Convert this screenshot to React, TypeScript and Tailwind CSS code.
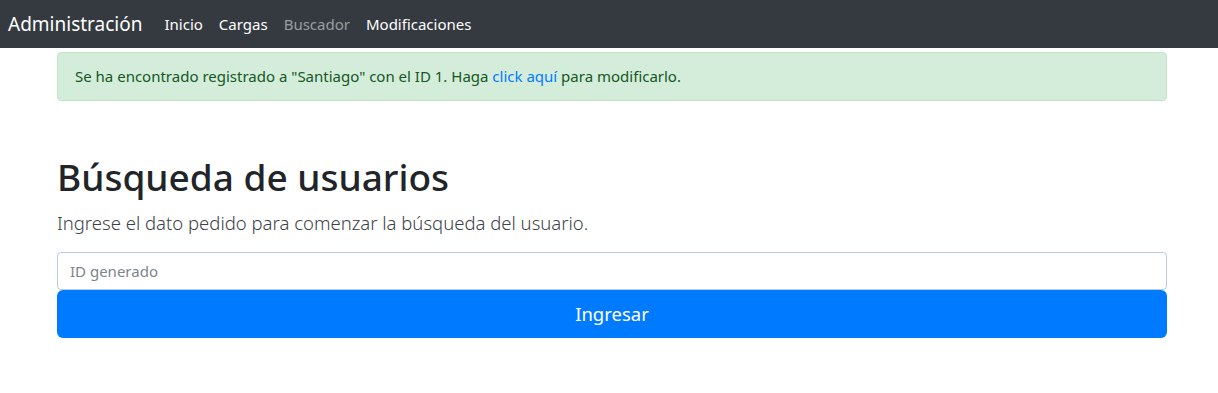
export default function App() {
  return (
    <div className="min-h-[393px] bg-white font-['Noto_Sans',sans-serif] text-[#212529]">
      {/* Navbar */}
      <nav className="flex h-12 items-center bg-[#343a40] px-2">
        <a className="mr-[22px] text-[19px] text-white">Administración</a>
        <div className="flex gap-4 text-[15px]">
          <a className="text-white">Inicio</a>
          <a className="text-white">Cargas</a>
          <a className="text-white/50">Buscador</a>
          <a className="text-white">Modificaciones</a>
        </div>
      </nav>

      <div className="ml-[57px] w-[1110px]">
        {/* Alert */}
        <div className="mt-1 rounded border border-[#c3e6cb] bg-[#d4edda] px-[17px] py-[12px] text-[15px] text-[#155724]">
          Se ha encontrado registrado a "Santiago" con el ID 1. Haga{" "}
          <a className="text-[#007bff]">click aquí</a> para modificarlo.
        </div>

        {/* Heading */}
        <h1 className="mt-[54px] text-[37px] font-medium leading-[1.2]">Búsqueda de usuarios</h1>
        <p className="mt-[10px] text-[18.5px] font-light text-[#3d4248]">
          Ingrese el dato pedido para comenzar la búsqueda del usuario.
        </p>

        {/* Form */}
        <div className="mt-[15px] flex flex-col">
          <input
            className="h-[38px] rounded border border-[#b9cde2] px-3 text-[15px] outline-none placeholder:text-[#7d858c]"
            placeholder="ID generado"
          />
          <button className="h-12 rounded-md bg-[#007bff] text-[18.5px] text-white">Ingresar</button>
        </div>
      </div>
    </div>
  );
}
